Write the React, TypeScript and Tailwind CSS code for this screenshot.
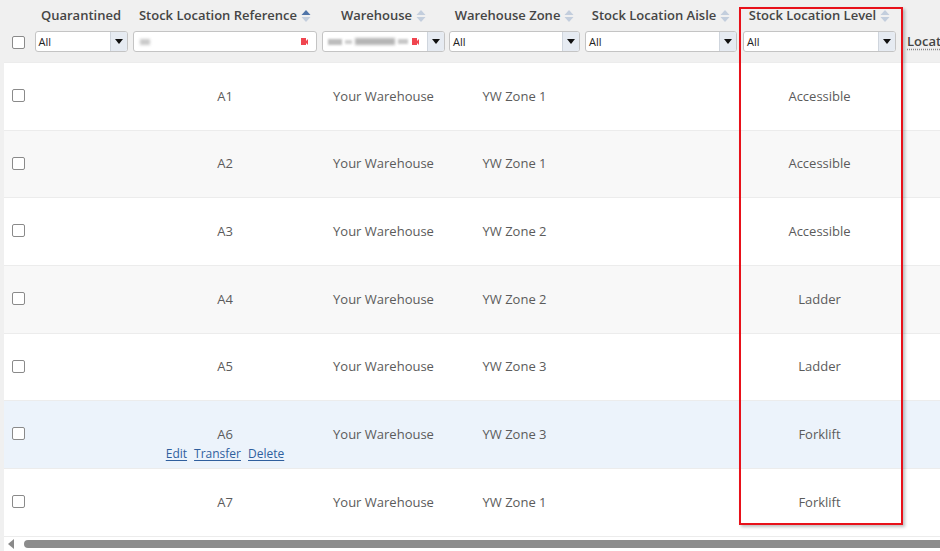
const rows = [
  { ref: "A1", zone: "YW Zone 1", level: "Accessible" },
  { ref: "A2", zone: "YW Zone 1", level: "Accessible" },
  { ref: "A3", zone: "YW Zone 2", level: "Accessible" },
  { ref: "A4", zone: "YW Zone 2", level: "Ladder" },
  { ref: "A5", zone: "YW Zone 3", level: "Ladder" },
  { ref: "A6", zone: "YW Zone 3", level: "Forklift", hover: true },
  { ref: "A7", zone: "YW Zone 1", level: "Forklift" },
];

const SortIcon = ({ active }: { active?: boolean }) => (
  <svg width="10" height="14" viewBox="0 0 10 14" className="ml-1 shrink-0">
    <path d="M5 1 L9.5 6 L0.5 6 Z" fill={active ? "#4f74a8" : "#c3cedd"} />
    <path d="M5 13 L9.5 8 L0.5 8 Z" fill="#c3cedd" />
  </svg>
);

const Checkbox = () => (
  <span className="block w-[13px] h-[13px] rounded-[2px] border border-[#8a8a8a] bg-white" />
);

const DropButton = () => (
  <span className="flex items-center justify-center w-[17px] h-full bg-[#e6ebf2] border-l border-[#cfd5dd]">
    <svg width="8" height="5" viewBox="0 0 8 5">
      <path d="M0 0 L8 0 L4 5 Z" fill="#111" />
    </svg>
  </span>
);

const Select = ({ w }: { w: string }) => (
  <div className={`${w} h-[21px] flex items-stretch border border-[#c4c4c4] rounded-[3px] bg-white overflow-hidden`}>
    <span className="flex-1 pl-[3px] text-[11px] leading-[19px] text-[#222]">All</span>
    <DropButton />
  </div>
);

const ClearMark = () => (
  <span className="flex items-center mr-[8px]">
    <span className="w-[5px] h-[7px] bg-[#f0454f]" />
    <span className="w-0 h-0 border-y-[3.5px] border-y-transparent border-r-[3px] border-r-[#f0454f] -ml-[1px]" />
  </span>
);

const HeaderTitle = ({ children, sort, active }: { children: string; sort?: boolean; active?: boolean }) => (
  <div className="h-[31px] flex items-center font-semibold text-[#454545] whitespace-nowrap">
    {children}
    {sort && <SortIcon active={active} />}
  </div>
);

export default function App() {
  return (
    <div className="relative w-[940px] h-[551px] overflow-hidden bg-[#f0f0f0] font-['Open_Sans','Noto_Sans',sans-serif] text-[13px]">
      <div className="pl-[4px]">
        {/* header */}
        <div className="flex h-[62px]">
          <div className="w-[28px] flex items-end justify-center pb-[13px] pl-[1px]">
            <Checkbox />
          </div>
          <div className="w-[98px] flex flex-col items-center">
            <HeaderTitle>Quarantined</HeaderTitle>
            <Select w="w-[93px]" />
          </div>
          <div className="w-[190px] flex flex-col items-center">
            <HeaderTitle sort active>Stock Location Reference</HeaderTitle>
            <div className="w-[184px] h-[21px] flex items-center border border-[#c4c4c4] rounded-[3px] bg-white">
              <span className="ml-[6px] w-[10px] h-[6px] bg-[#c9c9c9] blur-[1.5px]" />
              <span className="flex-1" />
              <ClearMark />
            </div>
          </div>
          <div className="w-[127px] flex flex-col items-center">
            <HeaderTitle sort>Warehouse</HeaderTitle>
            <div className="w-[123px] h-[21px] flex items-stretch border border-[#c4c4c4] rounded-[3px] bg-white overflow-hidden">
              <span className="flex items-center flex-1 gap-[3px] pl-[5px]">
                <span className="w-[14px] h-[6px] bg-[#bdbdbd] blur-[1px]" />
                <span className="w-[7px] h-[4px] bg-[#cfcfcf] blur-[1px]" />
                <span className="w-[40px] h-[7px] bg-[#b5b5b5] blur-[1.5px]" />
                <span className="w-[10px] h-[5px] bg-[#c8c8c8] blur-[1px]" />
              </span>
              <ClearMark />
              <DropButton />
            </div>
          </div>
          <div className="w-[135px] flex flex-col items-center">
            <HeaderTitle sort>Warehouse Zone</HeaderTitle>
            <Select w="w-[131px]" />
          </div>
          <div className="w-[158px] flex flex-col items-center">
            <HeaderTitle sort>Stock Location Aisle</HeaderTitle>
            <Select w="w-[152px]" />
          </div>
          <div className="w-[159px] flex flex-col items-center">
            <HeaderTitle sort>Stock Location Level</HeaderTitle>
            <Select w="w-[153px]" />
          </div>
          <div className="flex-1 flex flex-col pl-[8px] overflow-hidden">
            <div className="h-[31px]" />
            <span className="h-[21px] flex items-center whitespace-nowrap font-semibold text-[#454545] underline decoration-dotted decoration-[#888] underline-offset-[3px]">
              Location Type
            </span>
          </div>
        </div>

        {/* body */}
        <div className="bg-white">
          {rows.map((r, i) => (
            <div
              key={r.ref}
              className={`flex h-[67.7px] items-center text-[#5b5b5b] border-t border-[#ececec] ${
                r.hover ? "bg-[#ecf3fb]" : i % 2 === 1 ? "bg-[#f8f8f8]" : "bg-white"
              }`}
            >
              <div className="w-[28px] flex justify-center self-stretch items-center pb-[2px] pl-[1px]">
                <Checkbox />
              </div>
              <div className="w-[98px]" />
              <div className="w-[190px] relative flex justify-center">
                <span>{r.ref}</span>
                {r.hover && (
                  <div className="absolute top-[20px] left-0 right-0 flex justify-center gap-[7px] text-[12px] text-[#2f5f9e]">
                    <a className="underline underline-offset-2">Edit</a>
                    <a className="underline underline-offset-2">Transfer</a>
                    <a className="underline underline-offset-2">Delete</a>
                  </div>
                )}
              </div>
              <div className="w-[127px] flex justify-center">Your Warehouse</div>
              <div className="w-[135px] flex justify-center">{r.zone}</div>
              <div className="w-[158px]" />
              <div className="w-[159px] flex justify-center">{r.level}</div>
              <div className="flex-1" />
            </div>
          ))}
        </div>

        {/* horizontal scrollbar */}
        <div className="flex items-center h-[15px] bg-white border-t border-[#ececec]">
          <svg width="8" height="10" viewBox="0 0 8 10" className="ml-[3px] mr-[9px]">
            <path d="M7 0 L7 10 L1 5 Z" fill="#8a8a8a" />
          </svg>
          <div className="flex-1 h-[8px] rounded-l-full bg-[#8c8c8c]" />
        </div>
      </div>

      {/* highlight frame */}
      <div className="absolute left-[739px] top-[7px] w-[164px] h-[518px] border-2 border-[#e8111a] shadow-[2px_2px_3px_rgba(0,0,0,0.25)] pointer-events-none" />
    </div>
  );
}
